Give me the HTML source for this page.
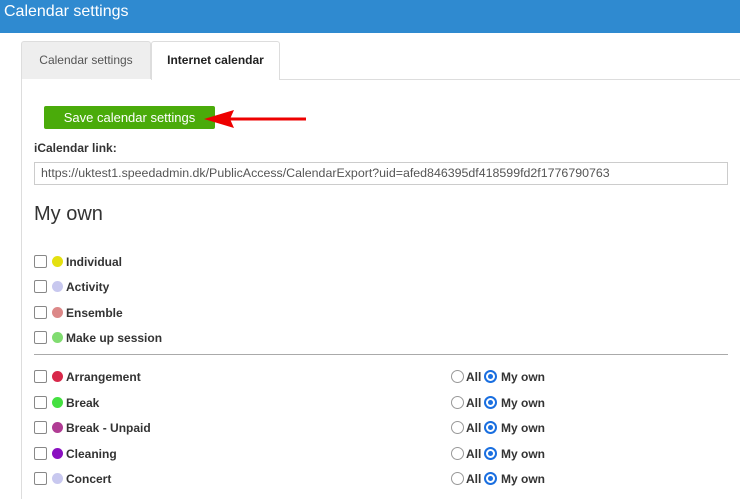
<!DOCTYPE html>
<html><head><style>
body{margin:0;width:740px;height:490px;overflow:hidden;background:#fff;font-family:"Liberation Sans",Arial,sans-serif;position:relative}
.hdr{position:absolute;left:0;top:0;width:740px;height:33px;background:#2f8ad0;color:#fff;font-size:16px;line-height:24px;padding-left:4px;box-sizing:border-box}
.tab{position:absolute;top:41px;height:38px;box-sizing:border-box;border:1px solid #ddd;border-bottom:none;border-radius:3px 3px 0 0;font-size:12px;line-height:37px;text-align:center}
.t1{left:21px;width:130px;background:#eee;color:#555}
.t2{left:151px;width:129px;background:#fff;color:#222;font-weight:bold;height:39px}
.line{position:absolute;left:279px;top:79px;width:461px;height:1px;background:#ddd}
.vline{position:absolute;left:21px;top:79px;width:1px;height:420px;background:#ddd}
.btn{position:absolute;left:44px;top:106px;width:171px;height:23px;background:#4aab0a;border-radius:2px;color:#fff;font-size:13px;line-height:23px;text-align:center}
.lbl{position:absolute;left:34px;top:141px;font-size:12px;font-weight:bold;color:#333}
.inp{position:absolute;left:34px;top:162px;width:694px;height:23px;box-sizing:border-box;border:1px solid #ccc;font-size:12.4px;color:#555;line-height:21px;padding-left:6px;white-space:nowrap}
.h{position:absolute;left:34px;top:203px;font-size:20px;color:#333}
.row{position:absolute;left:34px;height:16px;font-size:12px;font-weight:bold;color:#333;line-height:16px}
.cb{position:absolute;left:0;top:1px;width:11px;height:11px;border:1px solid #888;border-radius:2px;background:#fff}
.dot{position:absolute;left:18px;top:2px;width:11px;height:11px;border-radius:50%}
.row span.t{position:absolute;left:32px;top:0;white-space:nowrap}
.hr{position:absolute;left:34px;top:354px;width:694px;height:1px;background:#aaa}
.rad{position:absolute;left:451px;width:100px;height:16px;font-size:12px;font-weight:bold;color:#333;line-height:16px;white-space:nowrap}
.r{position:absolute;left:0;top:1px;width:11px;height:11px;border:1px solid #999;border-radius:50%}
.rs{left:33px;top:1px;border:2px solid #1a6fe0;width:9px;height:9px}
.rs:after{content:"";position:absolute;left:2px;top:2px;width:5px;height:5px;border-radius:50%;background:#1a6fe0}
.a{position:absolute;left:15px}.m{position:absolute;left:50px}
</style></head><body>
<div class="hdr">Calendar settings</div>
<div class="tab t1">Calendar settings</div>
<div class="tab t2">Internet calendar</div>
<div class="line"></div><div class="vline"></div>
<div class="btn">Save calendar settings</div>
<svg style="position:absolute;left:200px;top:108px" width="112" height="24"><line x1="106" y1="11" x2="26" y2="11" stroke="#e00" stroke-width="3"/><polygon points="4,11 34,2 30,11 34,20" fill="#e00"/></svg>
<div class="lbl">iCalendar link:</div>
<div class="inp">https://uktest1.speedadmin.dk/PublicAccess/CalendarExport?uid=afed846395df418599fd2f1776790763</div>
<div class="h">My own</div>
<div class="row" style="top:254px"><i class="cb"></i><i class="dot" style="background:#e4e010"></i><span class="t">Individual</span></div>
<div class="row" style="top:279px"><i class="cb"></i><i class="dot" style="background:#c8c8ef"></i><span class="t">Activity</span></div>
<div class="row" style="top:305px"><i class="cb"></i><i class="dot" style="background:#dc8888"></i><span class="t">Ensemble</span></div>
<div class="row" style="top:330px"><i class="cb"></i><i class="dot" style="background:#80dc70"></i><span class="t">Make up session</span></div>
<div class="hr"></div>
<div class="row" style="top:369px"><i class="cb"></i><i class="dot" style="background:#d8284a"></i><span class="t">Arrangement</span></div>
<div class="row" style="top:395px"><i class="cb"></i><i class="dot" style="background:#44e040"></i><span class="t">Break</span></div>
<div class="row" style="top:420px"><i class="cb"></i><i class="dot" style="background:#b03c94"></i><span class="t">Break - Unpaid</span></div>
<div class="row" style="top:446px"><i class="cb"></i><i class="dot" style="background:#8a10c0"></i><span class="t">Cleaning</span></div>
<div class="row" style="top:471px"><i class="cb"></i><i class="dot" style="background:#c8c8ef"></i><span class="t">Concert</span></div>
<div class="rad" style="top:369px"><i class="r"></i><span class="a">All</span><i class="r rs"></i><span class="m">My own</span></div>
<div class="rad" style="top:395px"><i class="r"></i><span class="a">All</span><i class="r rs"></i><span class="m">My own</span></div>
<div class="rad" style="top:420px"><i class="r"></i><span class="a">All</span><i class="r rs"></i><span class="m">My own</span></div>
<div class="rad" style="top:446px"><i class="r"></i><span class="a">All</span><i class="r rs"></i><span class="m">My own</span></div>
<div class="rad" style="top:471px"><i class="r"></i><span class="a">All</span><i class="r rs"></i><span class="m">My own</span></div>
</body></html>
